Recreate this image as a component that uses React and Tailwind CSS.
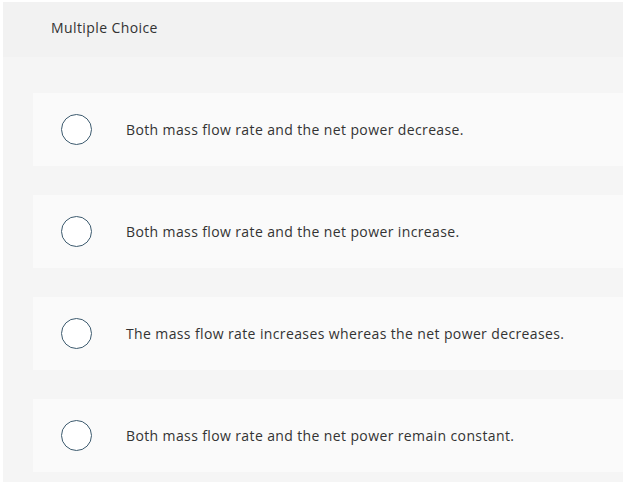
import React from 'react';

const choices = [
  'Both mass flow rate and the net power decrease.',
  'Both mass flow rate and the net power increase.',
  'The mass flow rate increases whereas the net power decreases.',
  'Both mass flow rate and the net power remain constant.',
];

export default function App() {
  return (
    <div
      className="w-[623px] h-[482px] overflow-hidden bg-white pl-[3px] pt-[2px]"
      style={{ fontFamily: '"Open Sans", sans-serif' }}
    >
      <div className="h-full bg-[#f5f5f5]">
        <div className="h-[55px] bg-[#f2f2f2] pl-[48px] pb-[4px] flex items-center text-[14px] tracking-[0.4px] text-[#333]">
          Multiple Choice
        </div>
        <div className="pt-[36px] pl-[30px] flex flex-col gap-[29px]">
          {choices.map((c) => (
            <div key={c} className="h-[73px] bg-[#fafafa] flex items-center">
              <div className="ml-[28px] w-[31px] h-[31px] rounded-full border-[1.5px] border-[#3c5a6e] bg-white shrink-0" />
              <div className="ml-[34px] text-[14px] tracking-[0.38px] text-[#333]">{c}</div>
            </div>
          ))}
        </div>
      </div>
    </div>
  );
}
